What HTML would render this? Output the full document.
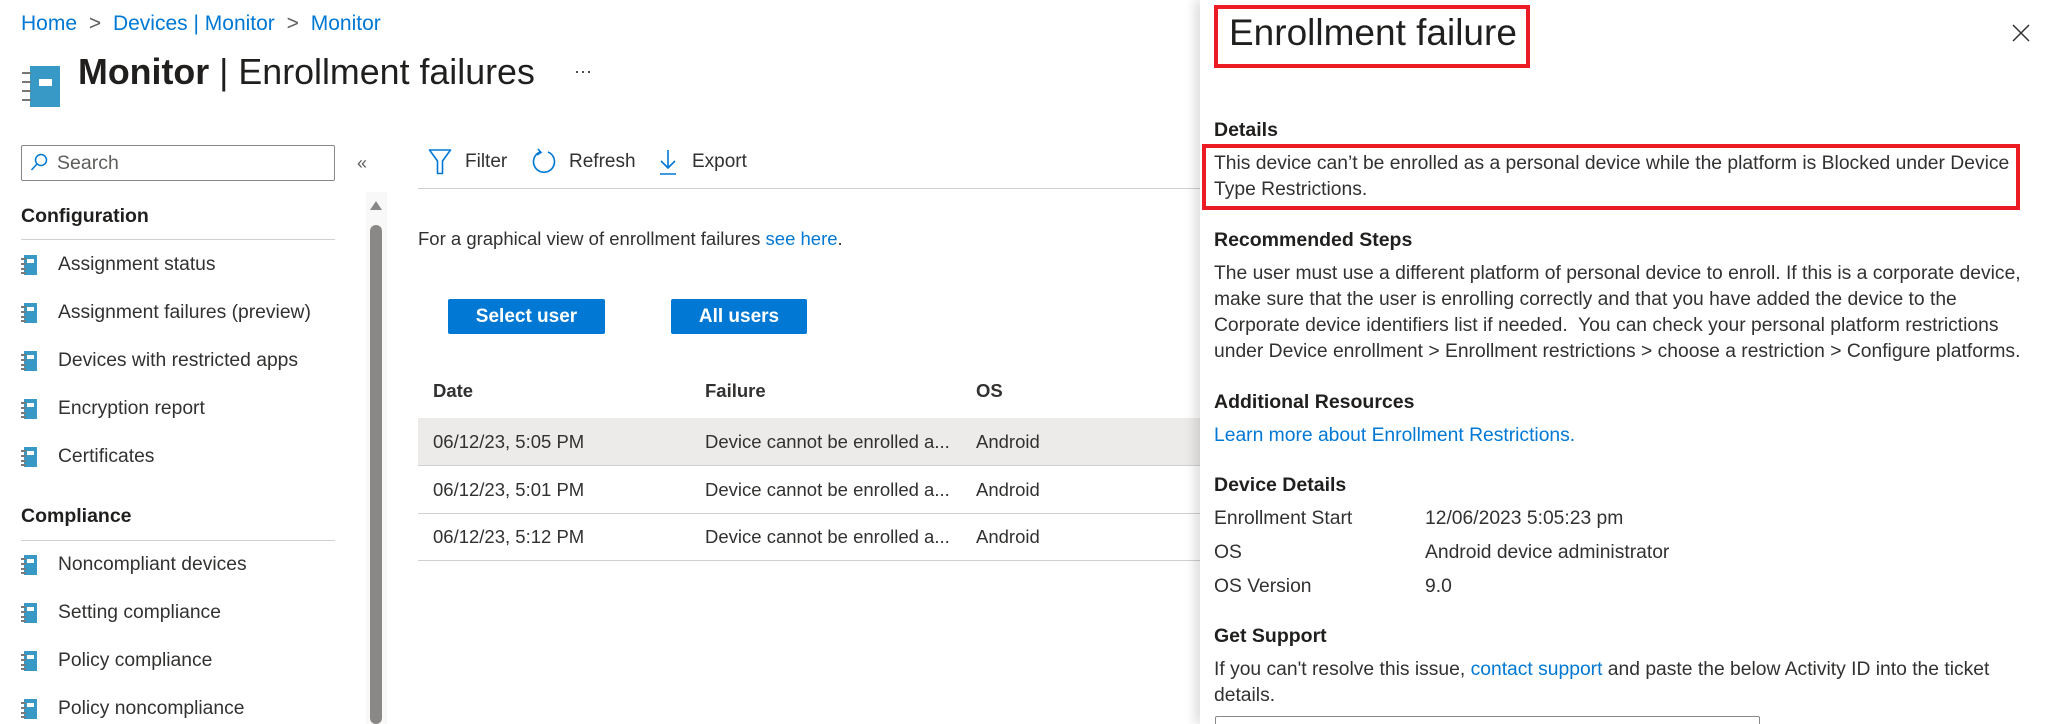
<!DOCTYPE html>
<html><head><meta charset="utf-8"><style>
*{margin:0;padding:0;box-sizing:border-box}
html,body{width:2045px;height:724px;overflow:hidden}
body{background:#fff;font-family:"Liberation Sans",sans-serif;color:#323130;position:relative}
.t{position:absolute;white-space:nowrap;line-height:26px}
.l{color:#0078d4}
.b{font-weight:bold;color:#201f1e}
.ic{position:absolute;width:16px;height:20px}
.ic i{position:absolute;left:3px;top:0;width:13px;height:20px;background:#3999c6}
.ic b{position:absolute;left:6px;top:4px;width:7px;height:4px;background:#fff}
.ic s{position:absolute;left:0;width:5px;height:2px;background:#7a7a7a}
.hl{position:absolute;height:1px;background:#d2d0ce}
.btn{position:absolute;background:#0078d4;color:#fff;font-weight:bold;font-size:19px;text-align:center;line-height:35px;border-radius:2px}
.n{font-size:19.3px}
.p{font-size:19.3px}
</style></head><body>

<div class="t l" style="left:21px;top:11px;font-size:21px">Home <span style="color:#605e5c;margin:0 6px">&gt;</span> Devices | Monitor <span style="color:#605e5c;margin:0 6px">&gt;</span> Monitor</div>

<div style="position:absolute;left:22px;top:66px;width:38px;height:41px">
 <div style="position:absolute;left:8px;top:0;width:30px;height:41px;background:#3999c6"></div>
 <div style="position:absolute;left:17px;top:13px;width:13px;height:7px;background:#fff"></div>
 <div style="position:absolute;left:0;top:6px;width:9px;height:2px;background:#777"></div>
 <div style="position:absolute;left:0;top:15px;width:9px;height:2px;background:#777"></div>
 <div style="position:absolute;left:0;top:24px;width:9px;height:2px;background:#777"></div>
 <div style="position:absolute;left:0;top:33px;width:9px;height:2px;background:#777"></div>
</div>
<div class="t" style="left:78px;top:50px;font-size:35.8px;line-height:44px;color:#201f1e"><b>Monitor</b> | Enrollment failures</div>
<div class="t" style="left:574px;top:58px;font-size:18px;color:#323130">···</div>

<div style="position:absolute;left:21px;top:145px;width:314px;height:36px;border:1px solid #8a8886;border-radius:2px"></div>
<svg style="position:absolute;left:30px;top:153px" width="18" height="20" viewBox="0 0 18 20"><circle cx="11" cy="7" r="5.5" fill="none" stroke="#0078d4" stroke-width="1.5"/><line x1="7" y1="11" x2="1.5" y2="17" stroke="#0078d4" stroke-width="1.5"/></svg>
<div class="t" style="left:57px;top:150px;font-size:19.5px;color:#605e5c">Search</div>
<div class="t" style="left:357px;top:150px;font-size:18px;color:#605e5c">«</div>

<div class="t b" style="left:21px;top:203px;font-size:19.5px">Configuration</div>
<div class="hl" style="left:21px;top:239px;width:314px"></div>
<div class="ic" style="left:21px;top:255px"><i></i><b></b><s style="top:3px"></s><s style="top:8px"></s><s style="top:13px"></s><s style="top:17px"></s></div>
<div class="t n" style="left:58px;top:252px">Assignment status</div>
<div class="ic" style="left:21px;top:303px"><i></i><b></b><s style="top:3px"></s><s style="top:8px"></s><s style="top:13px"></s><s style="top:17px"></s></div>
<div class="t n" style="left:58px;top:300px">Assignment failures (preview)</div>
<div class="ic" style="left:21px;top:351px"><i></i><b></b><s style="top:3px"></s><s style="top:8px"></s><s style="top:13px"></s><s style="top:17px"></s></div>
<div class="t n" style="left:58px;top:348px">Devices with restricted apps</div>
<div class="ic" style="left:21px;top:399px"><i></i><b></b><s style="top:3px"></s><s style="top:8px"></s><s style="top:13px"></s><s style="top:17px"></s></div>
<div class="t n" style="left:58px;top:396px">Encryption report</div>
<div class="ic" style="left:21px;top:447px"><i></i><b></b><s style="top:3px"></s><s style="top:8px"></s><s style="top:13px"></s><s style="top:17px"></s></div>
<div class="t n" style="left:58px;top:444px">Certificates</div>

<div class="t b" style="left:21px;top:503px;font-size:19.5px">Compliance</div>
<div class="hl" style="left:21px;top:540px;width:314px"></div>
<div class="ic" style="left:21px;top:555px"><i></i><b></b><s style="top:3px"></s><s style="top:8px"></s><s style="top:13px"></s><s style="top:17px"></s></div>
<div class="t n" style="left:58px;top:552px">Noncompliant devices</div>
<div class="ic" style="left:21px;top:603px"><i></i><b></b><s style="top:3px"></s><s style="top:8px"></s><s style="top:13px"></s><s style="top:17px"></s></div>
<div class="t n" style="left:58px;top:600px">Setting compliance</div>
<div class="ic" style="left:21px;top:651px"><i></i><b></b><s style="top:3px"></s><s style="top:8px"></s><s style="top:13px"></s><s style="top:17px"></s></div>
<div class="t n" style="left:58px;top:648px">Policy compliance</div>
<div class="ic" style="left:21px;top:699px"><i></i><b></b><s style="top:3px"></s><s style="top:8px"></s><s style="top:13px"></s><s style="top:17px"></s></div>
<div class="t n" style="left:58px;top:696px">Policy noncompliance</div>

<div style="position:absolute;left:366px;top:192px;width:21px;height:532px;background:#f8f8f8"></div>
<div style="position:absolute;left:370px;top:201px;width:0;height:0;border-left:6px solid transparent;border-right:6px solid transparent;border-bottom:9px solid #8a8886"></div>
<div style="position:absolute;left:370px;top:225px;width:12px;height:499px;background:#8a8886;border-radius:6px"></div>

<svg style="position:absolute;left:428px;top:148px" width="24" height="28" viewBox="0 0 24 28"><path d="M1.5 2 H22.5 L14.5 13 V25.5 H9.5 V13 Z" fill="none" stroke="#0078d4" stroke-width="1.6" stroke-linejoin="round"/></svg>
<div class="t" style="left:465px;top:149px;font-size:19px">Filter</div>
<svg style="position:absolute;left:531px;top:148px" width="26" height="28" viewBox="0 0 26 28"><path d="M9 4 A10.5 10.5 0 1 0 17 4" fill="none" stroke="#0078d4" stroke-width="1.6"/><path d="M7 1 L10 4.5 L6 7" fill="none" stroke="#0078d4" stroke-width="1.6"/></svg>
<div class="t" style="left:569px;top:149px;font-size:19px">Refresh</div>
<svg style="position:absolute;left:658px;top:148px" width="20" height="28" viewBox="0 0 20 28"><path d="M10 2 V20 M3 13 L10 20 L17 13 M2 26 H18" fill="none" stroke="#0078d4" stroke-width="1.6"/></svg>
<div class="t" style="left:692px;top:149px;font-size:19px">Export</div>
<div class="hl" style="left:418px;top:188px;width:790px"></div>

<div class="t" style="left:418px;top:226px;font-size:18.5px">For a graphical view of enrollment failures <span class="l">see here</span>.</div>

<div class="btn" style="left:448px;top:299px;width:157px">Select user</div>
<div class="btn" style="left:671px;top:299px;width:136px">All users</div>

<div class="t b" style="left:433px;top:378px;font-size:18.5px;color:#323130">Date</div>
<div class="t b" style="left:705px;top:378px;font-size:18.5px;color:#323130">Failure</div>
<div class="t b" style="left:976px;top:378px;font-size:18.5px;color:#323130">OS</div>
<div style="position:absolute;left:418px;top:418px;width:790px;height:47px;background:#edebe9"></div>
<div class="hl" style="left:418px;top:465px;width:790px"></div>
<div class="hl" style="left:418px;top:513px;width:790px"></div>
<div class="hl" style="left:418px;top:560px;width:790px"></div>
<div class="t" style="left:433px;top:429px;font-size:18.5px">06/12/23, 5:05 PM</div>
<div class="t" style="left:705px;top:429px;font-size:18.5px">Device cannot be enrolled a...</div>
<div class="t" style="left:976px;top:429px;font-size:18.5px">Android</div>
<div class="t" style="left:433px;top:477px;font-size:18.5px">06/12/23, 5:01 PM</div>
<div class="t" style="left:705px;top:477px;font-size:18.5px">Device cannot be enrolled a...</div>
<div class="t" style="left:976px;top:477px;font-size:18.5px">Android</div>
<div class="t" style="left:433px;top:524px;font-size:18.5px">06/12/23, 5:12 PM</div>
<div class="t" style="left:705px;top:524px;font-size:18.5px">Device cannot be enrolled a...</div>
<div class="t" style="left:976px;top:524px;font-size:18.5px">Android</div>

<div style="position:absolute;left:1200px;top:0;width:845px;height:724px;background:#fff;box-shadow:-6px 0 10px rgba(0,0,0,0.12)"></div>
<div style="position:absolute;left:1214px;top:5px;width:316px;height:63px;border:4px solid #ed1c24"></div>
<div class="t" style="left:1229px;top:11px;font-size:37px;line-height:44px;color:#201f1e">Enrollment failure</div>
<svg style="position:absolute;left:2012px;top:24px" width="18" height="18" viewBox="0 0 18 18"><path d="M1 1 L17 17 M17 1 L1 17" stroke="#323130" stroke-width="1.5"/></svg>

<div class="t b" style="left:1214px;top:117px;font-size:19.5px">Details</div>
<div style="position:absolute;left:1202px;top:144px;width:818px;height:66px;border:4px solid #ed1c24"></div>
<div class="t p" style="left:1214px;top:151px">This device can’t be enrolled as a personal device while the platform is Blocked under Device</div>
<div class="t p" style="left:1214px;top:177px">Type Restrictions.</div>

<div class="t b" style="left:1214px;top:227px;font-size:19.5px">Recommended Steps</div>
<div class="t p" style="left:1214px;top:261px">The user must use a different platform of personal device to enroll. If this is a corporate device,</div>
<div class="t p" style="left:1214px;top:287px">make sure that the user is enrolling correctly and that you have added the device to the</div>
<div class="t p" style="left:1214px;top:313px">Corporate device identifiers list if needed.&nbsp; You can check your personal platform restrictions</div>
<div class="t p" style="left:1214px;top:339px">under Device enrollment &gt; Enrollment restrictions &gt; choose a restriction &gt; Configure platforms.</div>

<div class="t b" style="left:1214px;top:389px;font-size:19.5px">Additional Resources</div>
<div class="t l p" style="left:1214px;top:423px">Learn more about Enrollment Restrictions.</div>

<div class="t b" style="left:1214px;top:472px;font-size:19.5px">Device Details</div>
<div class="t p" style="left:1214px;top:506px">Enrollment Start</div>
<div class="t p" style="left:1425px;top:506px">12/06/2023 5:05:23 pm</div>
<div class="t p" style="left:1214px;top:540px">OS</div>
<div class="t p" style="left:1425px;top:540px">Android device administrator</div>
<div class="t p" style="left:1214px;top:574px">OS Version</div>
<div class="t p" style="left:1425px;top:574px">9.0</div>

<div class="t b" style="left:1214px;top:623px;font-size:19.5px">Get Support</div>
<div class="t p" style="left:1214px;top:657px">If you can't resolve this issue, <span class="l">contact support</span> and paste the below Activity ID into the ticket</div>
<div class="t p" style="left:1214px;top:683px">details.</div>
<div style="position:absolute;left:1215px;top:716px;width:545px;height:8px;border:1px solid #8a8886;border-bottom:none;border-radius:2px 2px 0 0"></div>
</body></html>
